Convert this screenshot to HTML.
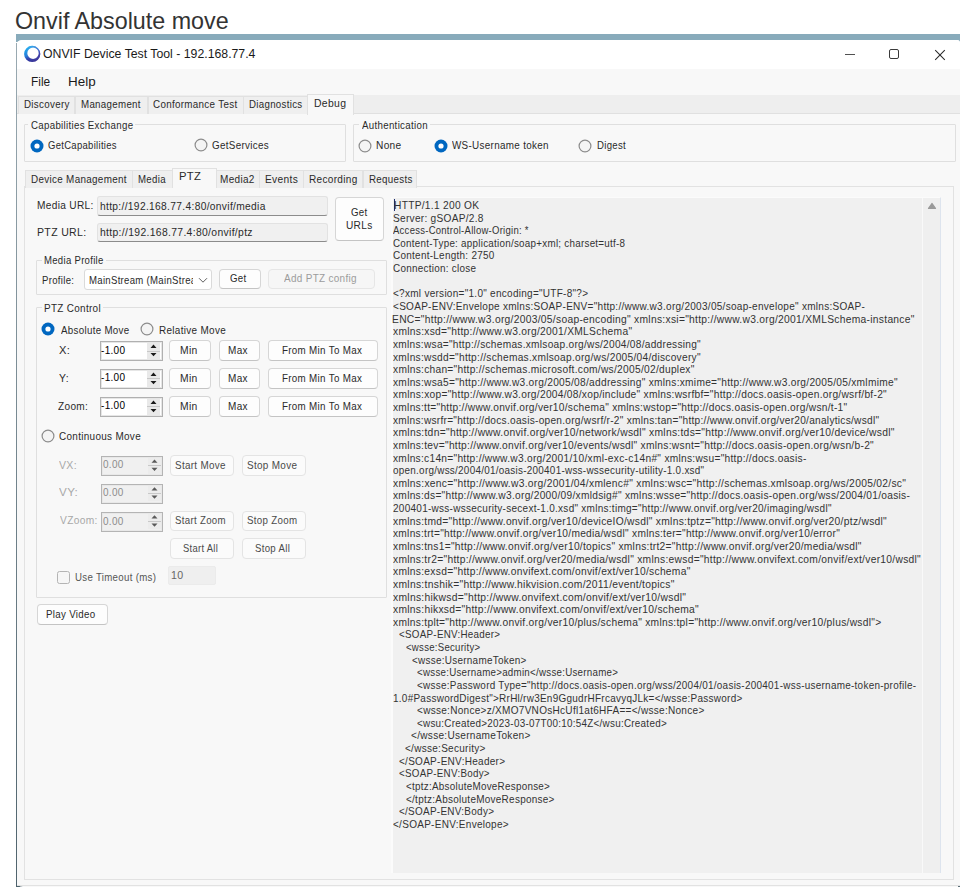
<!DOCTYPE html>
<html><head><meta charset="utf-8"><style>
html,body{margin:0;padding:0;background:#fff;}
body{width:970px;height:887px;position:relative;overflow:hidden;font-family:"Liberation Sans", sans-serif;}
div{font-family:"Liberation Sans", sans-serif;-webkit-text-stroke:0;}
.nt{-webkit-text-stroke:0;}
.rt{-webkit-text-stroke:0.1px currentColor;}
</style></head><body>
<div class="nt" style="position:absolute;left:14.71px;top:8.13px;font-size:23.2px;line-height:26.657px;white-space:pre;letter-spacing:0px;color:#333;font-weight:normal;transform:scaleX(1.0046);transform-origin:0 0;">Onvif Absolute move</div>
<div style="position:absolute;left:16px;top:34px;width:944px;height:8px;box-sizing:border-box;background:#88abbb;"></div>
<div style="position:absolute;left:16px;top:40.3px;width:944px;height:846.7px;box-sizing:border-box;background:#f8f8f8;border-radius:6px 3px 0 0;"></div>
<div style="position:absolute;left:16px;top:40.3px;width:944px;height:28.700000000000003px;box-sizing:border-box;background:#fff;border-radius:6px 3px 0 0;"></div>
<div style="position:absolute;left:16px;top:43px;width:1px;height:844px;box-sizing:border-box;background:linear-gradient(#9aaab2,#6c7e87 60%,#4f636d);"></div>
<div style="position:absolute;left:959px;top:69px;width:1px;height:817px;box-sizing:border-box;background:#ebebeb;"></div>
<svg style="position:absolute;left:16px;top:880px;" width="7" height="7" viewBox="0 0 7 7"><path d="M0,0 L0,7 L7,7 A7,7 0 0 1 0,0 Z" fill="#4d626c"/></svg>
<div style="position:absolute;left:958px;top:885px;width:2px;height:2px;box-sizing:border-box;background:#5a6e78;"></div>
<svg style="position:absolute;left:22px;top:44px;" width="20" height="20" viewBox="0 0 20 20"><defs><linearGradient id="ig" x1="0.1" y1="0.15" x2="0.55" y2="1"><stop offset="0" stop-color="#12a8ee"/><stop offset="0.45" stop-color="#1f78d8"/><stop offset="0.7" stop-color="#1c2aa0"/><stop offset="1" stop-color="#120e80"/></linearGradient><linearGradient id="ig2" x1="0" y1="0" x2="1" y2="0"><stop offset="0" stop-color="#fff" stop-opacity="0"/><stop offset="1" stop-color="#6a5cc0" stop-opacity="0.45"/></linearGradient></defs><path fill-rule="evenodd" fill="url(#ig)" d="M2.1,9.9 a8.1,8.1 0 1,0 16.2,0 a8.1,8.1 0 1,0 -16.2,0 Z M5.3,9.2 a5.75,5.75 0 1,0 11.5,0 a5.75,5.75 0 1,0 -11.5,0 Z"/><path fill-rule="evenodd" fill="url(#ig2)" d="M2.1,9.9 a8.1,8.1 0 1,0 16.2,0 a8.1,8.1 0 1,0 -16.2,0 Z M5.3,9.2 a5.75,5.75 0 1,0 11.5,0 a5.75,5.75 0 1,0 -11.5,0 Z"/></svg>
<div class="" style="position:absolute;left:43.42px;top:47.49px;font-size:12.5px;line-height:14.363px;white-space:pre;letter-spacing:0px;color:#1a1a1a;font-weight:normal;transform:scaleX(0.9820);transform-origin:0 0;">ONVIF Device Test Tool - 192.168.77.4</div>
<div style="position:absolute;left:845px;top:54px;width:10px;height:1px;box-sizing:border-box;background:#505050;"></div>
<div style="position:absolute;left:888.6px;top:48.6px;width:10.899999999999977px;height:10.899999999999999px;box-sizing:border-box;border:1.4px solid #3a3a3a;border-radius:2px;"></div>
<svg style="position:absolute;left:934px;top:48.6px;" width="12" height="12" viewBox="0 0 12 12"><path d="M1.2,1.2 L10.8,10.8 M10.8,1.2 L1.2,10.8" stroke="#2a2a2a" stroke-width="1.05"/></svg>
<div style="position:absolute;left:17px;top:69px;width:943px;height:25.5px;box-sizing:border-box;background:#f8f8f8;"></div>
<div class="" style="position:absolute;left:30.67px;top:74.89px;font-size:12.5px;line-height:14.363px;white-space:pre;letter-spacing:0px;color:#1a1a1a;font-weight:normal;transform:scaleX(0.9486);transform-origin:0 0;">File</div>
<div class="" style="position:absolute;left:68.35px;top:74.89px;font-size:12.5px;line-height:14.363px;white-space:pre;letter-spacing:0px;color:#1a1a1a;font-weight:normal;transform:scaleX(1.0733);transform-origin:0 0;">Help</div>
<div style="position:absolute;left:17px;top:94.5px;width:943px;height:19.0px;box-sizing:border-box;background:#eeeeee;"></div>
<div style="position:absolute;left:17px;top:113px;width:943px;height:773px;box-sizing:border-box;background:#f8f8f8;border-top:1px solid #e0e0e0;border-bottom:1px solid #e2e2e2;"></div>
<div style="position:absolute;left:17.900000000000002px;top:95.6px;width:57.599999999999994px;height:18.900000000000006px;box-sizing:border-box;background:#efefef;border:1px solid #e1e1e1;border-bottom:none;"></div>
<div class="" style="position:absolute;left:24.04px;top:98.27px;font-size:11px;line-height:12.639px;white-space:pre;letter-spacing:0.35px;color:#2a2a2a;font-weight:normal;transform:scaleX(0.8880);transform-origin:0 0;">Discovery</div>
<div style="position:absolute;left:74.6px;top:95.6px;width:73.9px;height:18.900000000000006px;box-sizing:border-box;background:#efefef;border:1px solid #e1e1e1;border-bottom:none;"></div>
<div class="" style="position:absolute;left:81.24px;top:98.27px;font-size:11px;line-height:12.639px;white-space:pre;letter-spacing:0.35px;color:#2a2a2a;font-weight:normal;transform:scaleX(0.8838);transform-origin:0 0;">Management</div>
<div style="position:absolute;left:147.6px;top:95.6px;width:96.1px;height:18.900000000000006px;box-sizing:border-box;background:#efefef;border:1px solid #e1e1e1;border-bottom:none;"></div>
<div class="" style="position:absolute;left:152.74px;top:98.27px;font-size:11px;line-height:12.639px;white-space:pre;letter-spacing:0.35px;color:#2a2a2a;font-weight:normal;transform:scaleX(0.8922);transform-origin:0 0;">Conformance Test</div>
<div style="position:absolute;left:242.79999999999998px;top:95.6px;width:65.50000000000003px;height:18.900000000000006px;box-sizing:border-box;background:#efefef;border:1px solid #e1e1e1;border-bottom:none;"></div>
<div class="" style="position:absolute;left:249.24px;top:98.27px;font-size:11px;line-height:12.639px;white-space:pre;letter-spacing:0.35px;color:#2a2a2a;font-weight:normal;transform:scaleX(0.8807);transform-origin:0 0;">Diagnostics</div>
<div style="position:absolute;left:307.40000000000003px;top:94.1px;width:46.299999999999955px;height:20.900000000000006px;box-sizing:border-box;background:#f8f8f8;border:1px solid #e1e1e1;border-bottom:none;"></div>
<div class="" style="position:absolute;left:313.89px;top:97.17px;font-size:11px;line-height:12.639px;white-space:pre;letter-spacing:0.35px;color:#2a2a2a;font-weight:normal;transform:scaleX(0.9463);transform-origin:0 0;">Debug</div>
<div style="position:absolute;left:23.6px;top:123.89999999999999px;width:322.9px;height:38.10000000000001px;box-sizing:border-box;border:1px solid #dfdfdf;border-radius:1px;"></div>
<div style="position:absolute;left:28.3px;top:120.3px;width:107.2px;height:8.000000000000014px;box-sizing:border-box;background:#f8f8f8;"></div>
<div class="" style="position:absolute;left:30.85px;top:118.87px;font-size:11px;line-height:12.639px;white-space:pre;letter-spacing:0.35px;color:#2a2a2a;font-weight:normal;transform:scaleX(0.8809);transform-origin:0 0;">Capabilities Exchange</div>
<svg style="position:absolute;left:29.5px;top:138.6px;" width="14" height="14" viewBox="0 0 14 14"><circle cx="7" cy="7" r="6.5" fill="#0067c0"/><circle cx="7" cy="7" r="2.6" fill="#fff"/></svg>
<div class="" style="position:absolute;left:47.56px;top:139.27px;font-size:11px;line-height:12.639px;white-space:pre;letter-spacing:0.35px;color:#2a2a2a;font-weight:normal;transform:scaleX(0.8622);transform-origin:0 0;">GetCapabilities</div>
<svg style="position:absolute;left:193.7px;top:138.4px;" width="14" height="14" viewBox="0 0 14 14"><circle cx="7" cy="7" r="5.9" fill="#f4f4f4" stroke="#8c8c8c" stroke-width="1.2"/></svg>
<div class="" style="position:absolute;left:211.54px;top:139.27px;font-size:11px;line-height:12.639px;white-space:pre;letter-spacing:0.35px;color:#2a2a2a;font-weight:normal;transform:scaleX(0.8953);transform-origin:0 0;">GetServices</div>
<div style="position:absolute;left:352.8px;top:124.0px;width:603.5px;height:38.30000000000001px;box-sizing:border-box;border:1px solid #dfdfdf;border-radius:1px;"></div>
<div style="position:absolute;left:358.5px;top:120.4px;width:71.0px;height:8.0px;box-sizing:border-box;background:#f8f8f8;"></div>
<div class="" style="position:absolute;left:361.50px;top:118.87px;font-size:11px;line-height:12.639px;white-space:pre;letter-spacing:0.35px;color:#2a2a2a;font-weight:normal;transform:scaleX(0.8826);transform-origin:0 0;">Authentication</div>
<svg style="position:absolute;left:357.5px;top:138.5px;" width="14" height="14" viewBox="0 0 14 14"><circle cx="7" cy="7" r="5.9" fill="#f4f4f4" stroke="#8c8c8c" stroke-width="1.2"/></svg>
<div class="" style="position:absolute;left:376.21px;top:139.27px;font-size:11px;line-height:12.639px;white-space:pre;letter-spacing:0.35px;color:#2a2a2a;font-weight:normal;transform:scaleX(0.9216);transform-origin:0 0;">None</div>
<svg style="position:absolute;left:433.5px;top:138.5px;" width="14" height="14" viewBox="0 0 14 14"><circle cx="7" cy="7" r="6.5" fill="#0067c0"/><circle cx="7" cy="7" r="2.6" fill="#fff"/></svg>
<div class="" style="position:absolute;left:452.00px;top:139.27px;font-size:11px;line-height:12.639px;white-space:pre;letter-spacing:0.35px;color:#2a2a2a;font-weight:normal;transform:scaleX(0.8966);transform-origin:0 0;">WS-Username token</div>
<svg style="position:absolute;left:577.7px;top:138.5px;" width="14" height="14" viewBox="0 0 14 14"><circle cx="7" cy="7" r="5.9" fill="#f4f4f4" stroke="#8c8c8c" stroke-width="1.2"/></svg>
<div class="" style="position:absolute;left:596.65px;top:139.27px;font-size:11px;line-height:12.639px;white-space:pre;letter-spacing:0.35px;color:#2a2a2a;font-weight:normal;transform:scaleX(0.8721);transform-origin:0 0;">Digest</div>
<div style="position:absolute;left:23.900000000000002px;top:186.4px;width:930.0px;height:693.3000000000001px;box-sizing:border-box;background:#f8f8f8;border:1px solid #e2e2e2;"></div>
<div style="position:absolute;left:24.900000000000002px;top:169.6px;width:108.1px;height:18.400000000000006px;box-sizing:border-box;background:#efefef;border:1px solid #e1e1e1;border-bottom:none;"></div>
<div class="" style="position:absolute;left:30.73px;top:172.57px;font-size:11px;line-height:12.639px;white-space:pre;letter-spacing:0.35px;color:#2a2a2a;font-weight:normal;transform:scaleX(0.8972);transform-origin:0 0;">Device Management</div>
<div style="position:absolute;left:132.1px;top:169.6px;width:41.099999999999994px;height:18.400000000000006px;box-sizing:border-box;background:#efefef;border:1px solid #e1e1e1;border-bottom:none;"></div>
<div class="" style="position:absolute;left:137.95px;top:172.57px;font-size:11px;line-height:12.639px;white-space:pre;letter-spacing:0.35px;color:#2a2a2a;font-weight:normal;transform:scaleX(0.8767);transform-origin:0 0;">Media</div>
<div style="position:absolute;left:215.79999999999998px;top:169.6px;width:44.30000000000004px;height:18.400000000000006px;box-sizing:border-box;background:#efefef;border:1px solid #e1e1e1;border-bottom:none;"></div>
<div class="" style="position:absolute;left:220.22px;top:172.57px;font-size:11px;line-height:12.639px;white-space:pre;letter-spacing:0.35px;color:#2a2a2a;font-weight:normal;transform:scaleX(0.9090);transform-origin:0 0;">Media2</div>
<div style="position:absolute;left:259.20000000000005px;top:169.6px;width:44.799999999999955px;height:18.400000000000006px;box-sizing:border-box;background:#efefef;border:1px solid #e1e1e1;border-bottom:none;"></div>
<div class="" style="position:absolute;left:265.21px;top:172.57px;font-size:11px;line-height:12.639px;white-space:pre;letter-spacing:0.35px;color:#2a2a2a;font-weight:normal;transform:scaleX(0.9246);transform-origin:0 0;">Events</div>
<div style="position:absolute;left:303.1px;top:169.6px;width:59.89999999999998px;height:18.400000000000006px;box-sizing:border-box;background:#efefef;border:1px solid #e1e1e1;border-bottom:none;"></div>
<div class="" style="position:absolute;left:309.22px;top:172.57px;font-size:11px;line-height:12.639px;white-space:pre;letter-spacing:0.35px;color:#2a2a2a;font-weight:normal;transform:scaleX(0.9114);transform-origin:0 0;">Recording</div>
<div style="position:absolute;left:362.8px;top:169.6px;width:54.0px;height:18.400000000000006px;box-sizing:border-box;background:#efefef;border:1px solid #e1e1e1;border-bottom:none;"></div>
<div class="" style="position:absolute;left:369.14px;top:172.57px;font-size:11px;line-height:12.639px;white-space:pre;letter-spacing:0.35px;color:#2a2a2a;font-weight:normal;transform:scaleX(0.8865);transform-origin:0 0;">Requests</div>
<div style="position:absolute;left:172.29999999999998px;top:167.79999999999998px;width:44.400000000000006px;height:20.700000000000017px;box-sizing:border-box;background:#f8f8f8;border:1px solid #e1e1e1;border-bottom:none;"></div>
<div class="" style="position:absolute;left:178.62px;top:170.47px;font-size:11px;line-height:12.639px;white-space:pre;letter-spacing:0.35px;color:#2a2a2a;font-weight:normal;transform:scaleX(1.0231);transform-origin:0 0;">PTZ</div>
<div class="" style="position:absolute;left:36.61px;top:199.47px;font-size:11px;line-height:12.639px;white-space:pre;letter-spacing:0.35px;color:#2a2a2a;font-weight:normal;transform:scaleX(0.9196);transform-origin:0 0;">Media URL:</div>
<div style="position:absolute;left:97.19999999999999px;top:195.6px;width:231.3px;height:20.099999999999994px;box-sizing:border-box;background:#f0f0f0;border:1px solid #e2e2e2;border-bottom:1.6px solid #8c8c8c;border-radius:3px;"></div>
<div class="" style="position:absolute;left:99.76px;top:199.57px;font-size:11px;line-height:12.639px;white-space:pre;letter-spacing:0.35px;color:#2a2a2a;font-weight:normal;transform:scaleX(0.9296);transform-origin:0 0;">http://192.168.77.4:80/onvif/media</div>
<div class="" style="position:absolute;left:36.58px;top:225.67px;font-size:11px;line-height:12.639px;white-space:pre;letter-spacing:0.35px;color:#2a2a2a;font-weight:normal;transform:scaleX(0.9578);transform-origin:0 0;">PTZ URL:</div>
<div style="position:absolute;left:97.19999999999999px;top:222.6px;width:231.3px;height:19.400000000000006px;box-sizing:border-box;background:#f0f0f0;border:1px solid #e2e2e2;border-bottom:1.6px solid #8c8c8c;border-radius:3px;"></div>
<div class="" style="position:absolute;left:99.75px;top:225.87px;font-size:11px;line-height:12.639px;white-space:pre;letter-spacing:0.35px;color:#2a2a2a;font-weight:normal;transform:scaleX(0.9421);transform-origin:0 0;">http://192.168.77.4:80/onvif/ptz</div>
<div style="position:absolute;left:335.0px;top:196.6px;width:49.0px;height:44.099999999999994px;box-sizing:border-box;background:#fdfdfd;border:1px solid #d6d6d6;border-bottom-color:#c4c4c4;border-radius:4px;"></div>
<div class="" style="position:absolute;left:350.60px;top:205.87px;font-size:11px;line-height:12.639px;white-space:pre;letter-spacing:0.35px;color:#2a2a2a;font-weight:normal;transform:scaleX(0.8801);transform-origin:0 0;">Get</div>
<div class="" style="position:absolute;left:345.72px;top:218.87px;font-size:11px;line-height:12.639px;white-space:pre;letter-spacing:0.35px;color:#2a2a2a;font-weight:normal;transform:scaleX(0.9192);transform-origin:0 0;">URLs</div>
<div style="position:absolute;left:35.9px;top:260.1px;width:350.8px;height:34.599999999999966px;box-sizing:border-box;border:1px solid #dfdfdf;border-radius:1px;"></div>
<div style="position:absolute;left:42.2px;top:256.5px;width:64.2px;height:8.0px;box-sizing:border-box;background:#f8f8f8;"></div>
<div class="" style="position:absolute;left:44.45px;top:254.47px;font-size:11px;line-height:12.639px;white-space:pre;letter-spacing:0.35px;color:#2a2a2a;font-weight:normal;transform:scaleX(0.8675);transform-origin:0 0;">Media Profile</div>
<div class="" style="position:absolute;left:41.75px;top:273.67px;font-size:11px;line-height:12.639px;white-space:pre;letter-spacing:0.35px;color:#2a2a2a;font-weight:normal;transform:scaleX(0.8699);transform-origin:0 0;">Profile:</div>
<div style="position:absolute;left:84.39999999999999px;top:269.20000000000005px;width:127.50000000000001px;height:20.499999999999943px;box-sizing:border-box;background:#fff;border:1px solid #dadada;border-radius:3px;"></div>
<div style="position:absolute;left:88px;top:270px;width:104.5px;height:18px;overflow:hidden;">
<div class="" style="position:absolute;left:1.00px;top:3.67px;font-size:11px;line-height:12.639px;white-space:pre;letter-spacing:0.35px;color:#2a2a2a;font-weight:normal;transform:scaleX(0.8700);transform-origin:0 0;">MainStream (MainStream)</div>
</div>
<svg style="position:absolute;left:198px;top:277px;" width="10" height="7" viewBox="0 0 10 7"><path d="M1,1.2 L5,5.2 L9,1.2" fill="none" stroke="#606060" stroke-width="1"/></svg>
<div style="position:absolute;left:218.6px;top:268.6px;width:42.00000000000003px;height:20.399999999999977px;box-sizing:border-box;background:#fdfdfd;border:1px solid #d6d6d6;border-bottom-color:#c4c4c4;border-radius:4px;"></div>
<div class="" style="position:absolute;left:229.70px;top:272.07px;font-size:11px;line-height:12.639px;white-space:pre;letter-spacing:0.35px;color:#2a2a2a;font-weight:normal;transform:scaleX(0.8801);transform-origin:0 0;">Get</div>
<div style="position:absolute;left:267.90000000000003px;top:268.6px;width:107.39999999999998px;height:20.399999999999977px;box-sizing:border-box;background:#f6f6f6;border:1px solid #e6e6e6;border-radius:4px;"></div>
<div class="" style="position:absolute;left:284.05px;top:272.42px;font-size:11px;line-height:12.639px;white-space:pre;letter-spacing:0.35px;color:#9c9c9c;font-weight:normal;transform:scaleX(0.9029);transform-origin:0 0;">Add PTZ config</div>
<div style="position:absolute;left:36.1px;top:307.40000000000003px;width:350.59999999999997px;height:290.3px;box-sizing:border-box;border:1px solid #dfdfdf;border-radius:1px;"></div>
<div style="position:absolute;left:41.5px;top:303.8px;width:61.2px;height:8.0px;box-sizing:border-box;background:#f8f8f8;"></div>
<div class="" style="position:absolute;left:43.72px;top:302.37px;font-size:11px;line-height:12.639px;white-space:pre;letter-spacing:0.35px;color:#2a2a2a;font-weight:normal;transform:scaleX(0.9019);transform-origin:0 0;">PTZ Control</div>
<svg style="position:absolute;left:41.3px;top:322.4px;" width="14" height="14" viewBox="0 0 14 14"><circle cx="7" cy="7" r="6.5" fill="#0067c0"/><circle cx="7" cy="7" r="2.6" fill="#fff"/></svg>
<div class="" style="position:absolute;left:60.70px;top:323.57px;font-size:11px;line-height:12.639px;white-space:pre;letter-spacing:0.35px;color:#2a2a2a;font-weight:normal;transform:scaleX(0.8861);transform-origin:0 0;">Absolute Move</div>
<svg style="position:absolute;left:140.3px;top:322.4px;" width="14" height="14" viewBox="0 0 14 14"><circle cx="7" cy="7" r="5.9" fill="#f4f4f4" stroke="#8c8c8c" stroke-width="1.2"/></svg>
<div class="" style="position:absolute;left:158.92px;top:323.57px;font-size:11px;line-height:12.639px;white-space:pre;letter-spacing:0.35px;color:#2a2a2a;font-weight:normal;transform:scaleX(0.9037);transform-origin:0 0;">Relative Move</div>
<div class="" style="position:absolute;left:58.63px;top:343.97px;font-size:11px;line-height:12.639px;white-space:pre;letter-spacing:0.35px;color:#2a2a2a;font-weight:normal;transform:scaleX(1.0128);transform-origin:0 0;">X:</div>
<div style="position:absolute;left:99.6px;top:340.8px;width:63.30000000000001px;height:20.69999999999999px;box-sizing:border-box;background:#fff;border:1px solid #b0b0b0;"></div>
<div style="position:absolute;left:100.6px;top:341.8px;width:61.30000000000001px;height:18.69999999999999px;box-sizing:border-box;border:1px solid #e6e6e6;"></div>
<div style="position:absolute;left:147.4px;top:343.2px;width:13.0px;height:15.800000000000011px;box-sizing:border-box;background:#e9e9e9;"></div>
<div style="position:absolute;left:147.4px;top:350.6px;width:13.0px;height:1.0px;box-sizing:border-box;background:#c8c8c8;"></div>
<svg style="position:absolute;left:147.4px;top:341.2px;" width="15.0" height="19.80000000000001" viewBox="0 0 15.0 19.80000000000001"><path d="M3.5,6.900000000000034 L9.5,6.900000000000034 L6.5,3.6000000000000343 Z M3.5,11.900000000000034 L9.5,11.900000000000034 L6.5,15.200000000000035 Z" fill="#1a1a1a"/></svg>
<div class="" style="position:absolute;left:101.49px;top:343.57px;font-size:11px;line-height:12.639px;white-space:pre;letter-spacing:0.35px;color:#000;font-weight:normal;transform:scaleX(0.9089);transform-origin:0 0;">-1.00</div>
<div style="position:absolute;left:169.1px;top:340.40000000000003px;width:41.900000000000006px;height:20.599999999999966px;box-sizing:border-box;background:#fdfdfd;border:1px solid #d6d6d6;border-bottom-color:#c4c4c4;border-radius:4px;"></div>
<div class="" style="position:absolute;left:179.74px;top:344.32px;font-size:11px;line-height:12.639px;white-space:pre;letter-spacing:0.35px;color:#2a2a2a;font-weight:normal;transform:scaleX(0.9382);transform-origin:0 0;">Min</div>
<div style="position:absolute;left:218.9px;top:340.40000000000003px;width:41.20000000000002px;height:20.599999999999966px;box-sizing:border-box;background:#fdfdfd;border:1px solid #d6d6d6;border-bottom-color:#c4c4c4;border-radius:4px;"></div>
<div class="" style="position:absolute;left:227.82px;top:344.32px;font-size:11px;line-height:12.639px;white-space:pre;letter-spacing:0.35px;color:#2a2a2a;font-weight:normal;transform:scaleX(0.9068);transform-origin:0 0;">Max</div>
<div style="position:absolute;left:268.0px;top:340.40000000000003px;width:110.19999999999999px;height:20.599999999999966px;box-sizing:border-box;background:#fdfdfd;border:1px solid #d6d6d6;border-bottom-color:#c4c4c4;border-radius:4px;"></div>
<div class="" style="position:absolute;left:281.89px;top:344.32px;font-size:11px;line-height:12.639px;white-space:pre;letter-spacing:0.35px;color:#2a2a2a;font-weight:normal;transform:scaleX(0.8899);transform-origin:0 0;">From Min To Max</div>
<div class="" style="position:absolute;left:58.64px;top:371.67px;font-size:11px;line-height:12.639px;white-space:pre;letter-spacing:0.35px;color:#2a2a2a;font-weight:normal;transform:scaleX(0.9475);transform-origin:0 0;">Y:</div>
<div style="position:absolute;left:99.6px;top:368.5px;width:63.30000000000001px;height:20.69999999999999px;box-sizing:border-box;background:#fff;border:1px solid #b0b0b0;"></div>
<div style="position:absolute;left:100.6px;top:369.5px;width:61.30000000000001px;height:18.69999999999999px;box-sizing:border-box;border:1px solid #e6e6e6;"></div>
<div style="position:absolute;left:147.4px;top:370.9px;width:13.0px;height:15.800000000000011px;box-sizing:border-box;background:#e9e9e9;"></div>
<div style="position:absolute;left:147.4px;top:378.29999999999995px;width:13.0px;height:1.0px;box-sizing:border-box;background:#c8c8c8;"></div>
<svg style="position:absolute;left:147.4px;top:368.9px;" width="15.0" height="19.80000000000001" viewBox="0 0 15.0 19.80000000000001"><path d="M3.5,6.899999999999977 L9.5,6.899999999999977 L6.5,3.5999999999999774 Z M3.5,11.899999999999977 L9.5,11.899999999999977 L6.5,15.199999999999978 Z" fill="#1a1a1a"/></svg>
<div class="" style="position:absolute;left:101.49px;top:371.27px;font-size:11px;line-height:12.639px;white-space:pre;letter-spacing:0.35px;color:#000;font-weight:normal;transform:scaleX(0.9089);transform-origin:0 0;">-1.00</div>
<div style="position:absolute;left:169.1px;top:368.1px;width:41.900000000000006px;height:20.599999999999966px;box-sizing:border-box;background:#fdfdfd;border:1px solid #d6d6d6;border-bottom-color:#c4c4c4;border-radius:4px;"></div>
<div class="" style="position:absolute;left:179.74px;top:372.02px;font-size:11px;line-height:12.639px;white-space:pre;letter-spacing:0.35px;color:#2a2a2a;font-weight:normal;transform:scaleX(0.9382);transform-origin:0 0;">Min</div>
<div style="position:absolute;left:218.9px;top:368.1px;width:41.20000000000002px;height:20.599999999999966px;box-sizing:border-box;background:#fdfdfd;border:1px solid #d6d6d6;border-bottom-color:#c4c4c4;border-radius:4px;"></div>
<div class="" style="position:absolute;left:227.82px;top:372.02px;font-size:11px;line-height:12.639px;white-space:pre;letter-spacing:0.35px;color:#2a2a2a;font-weight:normal;transform:scaleX(0.9068);transform-origin:0 0;">Max</div>
<div style="position:absolute;left:268.0px;top:368.1px;width:110.19999999999999px;height:20.599999999999966px;box-sizing:border-box;background:#fdfdfd;border:1px solid #d6d6d6;border-bottom-color:#c4c4c4;border-radius:4px;"></div>
<div class="" style="position:absolute;left:281.89px;top:372.02px;font-size:11px;line-height:12.639px;white-space:pre;letter-spacing:0.35px;color:#2a2a2a;font-weight:normal;transform:scaleX(0.8899);transform-origin:0 0;">From Min To Max</div>
<div class="" style="position:absolute;left:58.49px;top:399.67px;font-size:11px;line-height:12.639px;white-space:pre;letter-spacing:0.35px;color:#2a2a2a;font-weight:normal;transform:scaleX(0.9156);transform-origin:0 0;">Zoom:</div>
<div style="position:absolute;left:99.6px;top:396.5px;width:63.30000000000001px;height:20.69999999999999px;box-sizing:border-box;background:#fff;border:1px solid #b0b0b0;"></div>
<div style="position:absolute;left:100.6px;top:397.5px;width:61.30000000000001px;height:18.69999999999999px;box-sizing:border-box;border:1px solid #e6e6e6;"></div>
<div style="position:absolute;left:147.4px;top:398.9px;width:13.0px;height:15.800000000000011px;box-sizing:border-box;background:#e9e9e9;"></div>
<div style="position:absolute;left:147.4px;top:406.29999999999995px;width:13.0px;height:1.0px;box-sizing:border-box;background:#c8c8c8;"></div>
<svg style="position:absolute;left:147.4px;top:396.9px;" width="15.0" height="19.80000000000001" viewBox="0 0 15.0 19.80000000000001"><path d="M3.5,6.899999999999977 L9.5,6.899999999999977 L6.5,3.5999999999999774 Z M3.5,11.899999999999977 L9.5,11.899999999999977 L6.5,15.199999999999978 Z" fill="#1a1a1a"/></svg>
<div class="" style="position:absolute;left:101.49px;top:399.27px;font-size:11px;line-height:12.639px;white-space:pre;letter-spacing:0.35px;color:#000;font-weight:normal;transform:scaleX(0.9089);transform-origin:0 0;">-1.00</div>
<div style="position:absolute;left:169.1px;top:396.1px;width:41.900000000000006px;height:20.599999999999966px;box-sizing:border-box;background:#fdfdfd;border:1px solid #d6d6d6;border-bottom-color:#c4c4c4;border-radius:4px;"></div>
<div class="" style="position:absolute;left:179.74px;top:400.02px;font-size:11px;line-height:12.639px;white-space:pre;letter-spacing:0.35px;color:#2a2a2a;font-weight:normal;transform:scaleX(0.9382);transform-origin:0 0;">Min</div>
<div style="position:absolute;left:218.9px;top:396.1px;width:41.20000000000002px;height:20.599999999999966px;box-sizing:border-box;background:#fdfdfd;border:1px solid #d6d6d6;border-bottom-color:#c4c4c4;border-radius:4px;"></div>
<div class="" style="position:absolute;left:227.82px;top:400.02px;font-size:11px;line-height:12.639px;white-space:pre;letter-spacing:0.35px;color:#2a2a2a;font-weight:normal;transform:scaleX(0.9068);transform-origin:0 0;">Max</div>
<div style="position:absolute;left:268.0px;top:396.1px;width:110.19999999999999px;height:20.599999999999966px;box-sizing:border-box;background:#fdfdfd;border:1px solid #d6d6d6;border-bottom-color:#c4c4c4;border-radius:4px;"></div>
<div class="" style="position:absolute;left:281.89px;top:400.02px;font-size:11px;line-height:12.639px;white-space:pre;letter-spacing:0.35px;color:#2a2a2a;font-weight:normal;transform:scaleX(0.8899);transform-origin:0 0;">From Min To Max</div>
<svg style="position:absolute;left:41.3px;top:428.5px;" width="14" height="14" viewBox="0 0 14 14"><circle cx="7" cy="7" r="5.9" fill="#f4f4f4" stroke="#8c8c8c" stroke-width="1.2"/></svg>
<div class="" style="position:absolute;left:59.13px;top:429.87px;font-size:11px;line-height:12.639px;white-space:pre;letter-spacing:0.35px;color:#2a2a2a;font-weight:normal;transform:scaleX(0.9024);transform-origin:0 0;">Continuous Move</div>
<div class="" style="position:absolute;left:59.20px;top:458.87px;font-size:11px;line-height:12.639px;white-space:pre;letter-spacing:0.35px;color:#a8a8a8;font-weight:normal;transform:scaleX(0.9578);transform-origin:0 0;">VX:</div>
<div style="position:absolute;left:100.8px;top:455.6px;width:62.60000000000001px;height:20.399999999999977px;box-sizing:border-box;background:#f0f0f0;border:1px solid #b4b4b4;"></div>
<div style="position:absolute;left:101.8px;top:456.6px;width:60.60000000000001px;height:18.399999999999977px;box-sizing:border-box;border:1px solid #e8e8e8;"></div>
<div style="position:absolute;left:147.9px;top:458px;width:13.0px;height:15.5px;box-sizing:border-box;background:#ececec;"></div>
<div style="position:absolute;left:147.9px;top:465.25px;width:13.0px;height:1.0px;box-sizing:border-box;background:#c8c8c8;"></div>
<svg style="position:absolute;left:147.9px;top:456px;" width="15.0" height="19.5" viewBox="0 0 15.0 19.5"><path d="M3.5,6.75 L9.5,6.75 L6.5,3.45 Z M3.5,11.75 L9.5,11.75 L6.5,15.05 Z" fill="#5a5a5a"/></svg>
<div class="" style="position:absolute;left:102.69px;top:458.37px;font-size:11px;line-height:12.639px;white-space:pre;letter-spacing:0.35px;color:#8c8c8c;font-weight:normal;transform:scaleX(0.9065);transform-origin:0 0;">0.00</div>
<div style="position:absolute;left:169.79999999999998px;top:455.3px;width:64.20000000000002px;height:20.30000000000001px;box-sizing:border-box;background:#fbfbfb;border:1px solid #e4e4e4;border-radius:4px;"></div>
<div class="" style="position:absolute;left:175.14px;top:459.07px;font-size:11px;line-height:12.639px;white-space:pre;letter-spacing:0.35px;color:#4a4a4a;font-weight:normal;transform:scaleX(0.8966);transform-origin:0 0;">Start Move</div>
<div style="position:absolute;left:241.9px;top:455.3px;width:63.99999999999997px;height:20.30000000000001px;box-sizing:border-box;background:#fbfbfb;border:1px solid #e4e4e4;border-radius:4px;"></div>
<div class="" style="position:absolute;left:247.39px;top:459.07px;font-size:11px;line-height:12.639px;white-space:pre;letter-spacing:0.35px;color:#4a4a4a;font-weight:normal;transform:scaleX(0.9030);transform-origin:0 0;">Stop Move</div>
<div class="" style="position:absolute;left:59.20px;top:486.47px;font-size:11px;line-height:12.639px;white-space:pre;letter-spacing:0.35px;color:#a8a8a8;font-weight:normal;transform:scaleX(1.0577);transform-origin:0 0;">VY:</div>
<div style="position:absolute;left:100.8px;top:483.70000000000005px;width:62.60000000000001px;height:19.899999999999977px;box-sizing:border-box;background:#f0f0f0;border:1px solid #b4b4b4;"></div>
<div style="position:absolute;left:101.8px;top:484.70000000000005px;width:60.60000000000001px;height:17.899999999999977px;box-sizing:border-box;border:1px solid #e8e8e8;"></div>
<div style="position:absolute;left:147.9px;top:486.1px;width:13.0px;height:15.0px;box-sizing:border-box;background:#ececec;"></div>
<div style="position:absolute;left:147.9px;top:493.1px;width:13.0px;height:1.0px;box-sizing:border-box;background:#c8c8c8;"></div>
<svg style="position:absolute;left:147.9px;top:484.1px;" width="15.0" height="19.0" viewBox="0 0 15.0 19.0"><path d="M3.5,6.5 L9.5,6.5 L6.5,3.2 Z M3.5,11.5 L9.5,11.5 L6.5,14.8 Z" fill="#5a5a5a"/></svg>
<div class="" style="position:absolute;left:102.69px;top:486.47px;font-size:11px;line-height:12.639px;white-space:pre;letter-spacing:0.35px;color:#8c8c8c;font-weight:normal;transform:scaleX(0.9065);transform-origin:0 0;">0.00</div>
<div class="" style="position:absolute;left:59.60px;top:514.47px;font-size:11px;line-height:12.639px;white-space:pre;letter-spacing:0.35px;color:#a8a8a8;font-weight:normal;transform:scaleX(0.9270);transform-origin:0 0;">VZoom:</div>
<div style="position:absolute;left:100.8px;top:511.80000000000007px;width:62.60000000000001px;height:19.999999999999886px;box-sizing:border-box;background:#f0f0f0;border:1px solid #b4b4b4;"></div>
<div style="position:absolute;left:101.8px;top:512.8000000000001px;width:60.60000000000001px;height:17.999999999999886px;box-sizing:border-box;border:1px solid #e8e8e8;"></div>
<div style="position:absolute;left:147.9px;top:514.2px;width:13.0px;height:15.099999999999909px;box-sizing:border-box;background:#ececec;"></div>
<div style="position:absolute;left:147.9px;top:521.25px;width:13.0px;height:1.0px;box-sizing:border-box;background:#c8c8c8;"></div>
<svg style="position:absolute;left:147.9px;top:512.2px;" width="15.0" height="19.09999999999991" viewBox="0 0 15.0 19.09999999999991"><path d="M3.5,6.5499999999999545 L9.5,6.5499999999999545 L6.5,3.2499999999999547 Z M3.5,11.549999999999955 L9.5,11.549999999999955 L6.5,14.849999999999955 Z" fill="#5a5a5a"/></svg>
<div class="" style="position:absolute;left:102.69px;top:514.57px;font-size:11px;line-height:12.639px;white-space:pre;letter-spacing:0.35px;color:#8c8c8c;font-weight:normal;transform:scaleX(0.9065);transform-origin:0 0;">0.00</div>
<div style="position:absolute;left:169.79999999999998px;top:510.5px;width:64.20000000000002px;height:20.399999999999977px;box-sizing:border-box;background:#fbfbfb;border:1px solid #e4e4e4;border-radius:4px;"></div>
<div class="" style="position:absolute;left:175.15px;top:514.32px;font-size:11px;line-height:12.639px;white-space:pre;letter-spacing:0.35px;color:#4a4a4a;font-weight:normal;transform:scaleX(0.8792);transform-origin:0 0;">Start Zoom</div>
<div style="position:absolute;left:241.9px;top:510.5px;width:63.99999999999997px;height:20.399999999999977px;box-sizing:border-box;background:#fbfbfb;border:1px solid #e4e4e4;border-radius:4px;"></div>
<div class="" style="position:absolute;left:247.40px;top:514.32px;font-size:11px;line-height:12.639px;white-space:pre;letter-spacing:0.35px;color:#4a4a4a;font-weight:normal;transform:scaleX(0.8853);transform-origin:0 0;">Stop Zoom</div>
<div style="position:absolute;left:169.79999999999998px;top:538.3000000000001px;width:64.20000000000002px;height:20.59999999999991px;box-sizing:border-box;background:#fbfbfb;border:1px solid #e4e4e4;border-radius:4px;"></div>
<div class="" style="position:absolute;left:182.86px;top:542.22px;font-size:11px;line-height:12.639px;white-space:pre;letter-spacing:0.35px;color:#4a4a4a;font-weight:normal;transform:scaleX(0.8548);transform-origin:0 0;">Start All</div>
<div style="position:absolute;left:241.9px;top:538.3000000000001px;width:63.99999999999997px;height:20.59999999999991px;box-sizing:border-box;background:#fbfbfb;border:1px solid #e4e4e4;border-radius:4px;"></div>
<div class="" style="position:absolute;left:254.85px;top:542.22px;font-size:11px;line-height:12.639px;white-space:pre;letter-spacing:0.35px;color:#4a4a4a;font-weight:normal;transform:scaleX(0.8755);transform-origin:0 0;">Stop All</div>
<div style="position:absolute;left:57.1px;top:570.5px;width:13.399999999999999px;height:13.0px;box-sizing:border-box;background:#f6f6f6;border:1px solid #b4b4b4;border-radius:2.5px;"></div>
<div class="" style="position:absolute;left:75.30px;top:570.87px;font-size:11px;line-height:12.639px;white-space:pre;letter-spacing:0.35px;color:#555;font-weight:normal;transform:scaleX(0.8793);transform-origin:0 0;">Use Timeout (ms)</div>
<div style="position:absolute;left:167.5px;top:565.6px;width:48.5px;height:19.199999999999932px;box-sizing:border-box;background:#efefef;border:1px solid #ebebeb;border-radius:2px;"></div>
<div class="" style="position:absolute;left:170.84px;top:569.37px;font-size:11px;line-height:12.639px;white-space:pre;letter-spacing:0.35px;color:#666;font-weight:normal;transform:scaleX(0.9635);transform-origin:0 0;">10</div>
<div style="position:absolute;left:36.9px;top:604.1px;width:71.30000000000001px;height:20.799999999999955px;box-sizing:border-box;background:#fdfdfd;border:1px solid #d6d6d6;border-bottom-color:#c4c4c4;border-radius:4px;"></div>
<div class="" style="position:absolute;left:46.24px;top:608.12px;font-size:11px;line-height:12.639px;white-space:pre;letter-spacing:0.35px;color:#2a2a2a;font-weight:normal;transform:scaleX(0.8850);transform-origin:0 0;">Play Video</div>
<div style="position:absolute;left:390.8px;top:196.6px;width:550.4000000000001px;height:676.9px;box-sizing:border-box;background:#f0f0f0;border-left:2px solid #fbfbfb;border-top:1.2px solid #fbfbfb;border-right:1.2px solid #dde4ee;"></div>
<div style="position:absolute;left:922.3px;top:197.6px;width:17.700000000000045px;height:675.9px;box-sizing:border-box;background:#efefef;border-left:1.6px solid #f9f9f9;"></div>
<svg style="position:absolute;left:926px;top:201px;" width="12" height="10" viewBox="0 0 12 10"><path d="M2.6,7.4 L6,2.6 L9.4,7.4 Z" fill="#9a9a9a" stroke="#9a9a9a" stroke-width="1.4" stroke-linejoin="round"/></svg>
<div style="position:absolute;left:394px;top:199px;width:1px;height:12px;box-sizing:border-box;background:#1f2f6f;"></div>
<div class="nt" style="position:absolute;left:394.10px;top:198.97px;font-size:11px;line-height:12.639px;white-space:pre;letter-spacing:0.3px;color:#333;font-weight:normal;transform:scaleX(0.9278);transform-origin:0 0;">HTTP/1.1 200 OK</div>
<div class="nt" style="position:absolute;left:392.68px;top:211.60px;font-size:11px;line-height:12.639px;white-space:pre;letter-spacing:0.3px;color:#333;font-weight:normal;transform:scaleX(0.9195);transform-origin:0 0;">Server: gSOAP/2.8</div>
<div class="nt" style="position:absolute;left:393.20px;top:224.23px;font-size:11px;line-height:12.639px;white-space:pre;letter-spacing:0.3px;color:#333;font-weight:normal;transform:scaleX(0.8647);transform-origin:0 0;">Access-Control-Allow-Origin: *</div>
<div class="nt" style="position:absolute;left:392.74px;top:236.86px;font-size:11px;line-height:12.639px;white-space:pre;letter-spacing:0.3px;color:#333;font-weight:normal;transform:scaleX(0.8918);transform-origin:0 0;">Content-Type: application/soap+xml; charset=utf-8</div>
<div class="nt" style="position:absolute;left:392.73px;top:249.49px;font-size:11px;line-height:12.639px;white-space:pre;letter-spacing:0.3px;color:#333;font-weight:normal;transform:scaleX(0.9036);transform-origin:0 0;">Content-Length: 2750</div>
<div class="nt" style="position:absolute;left:392.74px;top:262.12px;font-size:11px;line-height:12.639px;white-space:pre;letter-spacing:0.3px;color:#333;font-weight:normal;transform:scaleX(0.8994);transform-origin:0 0;">Connection: close</div>
<div class="nt" style="position:absolute;left:392.73px;top:287.38px;font-size:11px;line-height:12.639px;white-space:pre;letter-spacing:0.3px;color:#333;font-weight:normal;transform:scaleX(0.9096);transform-origin:0 0;">&lt;?xml version="1.0" encoding="UTF-8"?&gt;</div>
<div class="nt" style="position:absolute;left:392.73px;top:300.01px;font-size:11px;line-height:12.639px;white-space:pre;letter-spacing:0.3px;color:#333;font-weight:normal;transform:scaleX(0.9119);transform-origin:0 0;">&lt;SOAP-ENV:Envelope xmlns:SOAP-ENV="http://www.w3.org/2003/05/soap-envelope" xmlns:SOAP-</div>
<div class="nt" style="position:absolute;left:392.40px;top:312.64px;font-size:11px;line-height:12.639px;white-space:pre;letter-spacing:0.3px;color:#333;font-weight:normal;transform:scaleX(0.9342);transform-origin:0 0;">ENC="http://www.w3.org/2003/05/soap-encoding" xmlns:xsi="http://www.w3.org/2001/XMLSchema-instance"</div>
<div class="nt" style="position:absolute;left:393.20px;top:325.27px;font-size:11px;line-height:12.639px;white-space:pre;letter-spacing:0.3px;color:#333;font-weight:normal;transform:scaleX(0.9323);transform-origin:0 0;">xmlns:xsd="http://www.w3.org/2001/XMLSchema"</div>
<div class="nt" style="position:absolute;left:393.00px;top:337.90px;font-size:11px;line-height:12.639px;white-space:pre;letter-spacing:0.3px;color:#333;font-weight:normal;transform:scaleX(0.9214);transform-origin:0 0;">xmlns:wsa="http://schemas.xmlsoap.org/ws/2004/08/addressing"</div>
<div class="nt" style="position:absolute;left:393.20px;top:350.53px;font-size:11px;line-height:12.639px;white-space:pre;letter-spacing:0.3px;color:#333;font-weight:normal;transform:scaleX(0.9243);transform-origin:0 0;">xmlns:wsdd="http://schemas.xmlsoap.org/ws/2005/04/discovery"</div>
<div class="nt" style="position:absolute;left:393.20px;top:363.16px;font-size:11px;line-height:12.639px;white-space:pre;letter-spacing:0.3px;color:#333;font-weight:normal;transform:scaleX(0.9269);transform-origin:0 0;">xmlns:chan="http://schemas.microsoft.com/ws/2005/02/duplex"</div>
<div class="nt" style="position:absolute;left:393.20px;top:375.79px;font-size:11px;line-height:12.639px;white-space:pre;letter-spacing:0.3px;color:#333;font-weight:normal;transform:scaleX(0.9255);transform-origin:0 0;">xmlns:wsa5="http://www.w3.org/2005/08/addressing" xmlns:xmime="http://www.w3.org/2005/05/xmlmime"</div>
<div class="nt" style="position:absolute;left:393.20px;top:388.42px;font-size:11px;line-height:12.639px;white-space:pre;letter-spacing:0.3px;color:#333;font-weight:normal;transform:scaleX(0.9275);transform-origin:0 0;">xmlns:xop="http://www.w3.org/2004/08/xop/include" xmlns:wsrfbf="http://docs.oasis-open.org/wsrf/bf-2"</div>
<div class="nt" style="position:absolute;left:393.20px;top:401.05px;font-size:11px;line-height:12.639px;white-space:pre;letter-spacing:0.3px;color:#333;font-weight:normal;transform:scaleX(0.9254);transform-origin:0 0;">xmlns:tt="http://www.onvif.org/ver10/schema" xmlns:wstop="http://docs.oasis-open.org/wsn/t-1"</div>
<div class="nt" style="position:absolute;left:393.20px;top:413.68px;font-size:11px;line-height:12.639px;white-space:pre;letter-spacing:0.3px;color:#333;font-weight:normal;transform:scaleX(0.9195);transform-origin:0 0;">xmlns:wsrfr="http://docs.oasis-open.org/wsrf/r-2" xmlns:tan="http://www.onvif.org/ver20/analytics/wsdl"</div>
<div class="nt" style="position:absolute;left:393.20px;top:426.31px;font-size:11px;line-height:12.639px;white-space:pre;letter-spacing:0.3px;color:#333;font-weight:normal;transform:scaleX(0.9372);transform-origin:0 0;">xmlns:tdn="http://www.onvif.org/ver10/network/wsdl" xmlns:tds="http://www.onvif.org/ver10/device/wsdl"</div>
<div class="nt" style="position:absolute;left:393.20px;top:438.94px;font-size:11px;line-height:12.639px;white-space:pre;letter-spacing:0.3px;color:#333;font-weight:normal;transform:scaleX(0.9304);transform-origin:0 0;">xmlns:tev="http://www.onvif.org/ver10/events/wsdl" xmlns:wsnt="http://docs.oasis-open.org/wsn/b-2"</div>
<div class="nt" style="position:absolute;left:393.20px;top:451.57px;font-size:11px;line-height:12.639px;white-space:pre;letter-spacing:0.3px;color:#333;font-weight:normal;transform:scaleX(0.9261);transform-origin:0 0;">xmlns:c14n="http://www.w3.org/2001/10/xml-exc-c14n#" xmlns:wsu="http://docs.oasis-</div>
<div class="nt" style="position:absolute;left:392.69px;top:464.20px;font-size:11px;line-height:12.639px;white-space:pre;letter-spacing:0.3px;color:#333;font-weight:normal;transform:scaleX(0.8994);transform-origin:0 0;">open.org/wss/2004/01/oasis-200401-wss-wssecurity-utility-1.0.xsd"</div>
<div class="nt" style="position:absolute;left:393.20px;top:476.83px;font-size:11px;line-height:12.639px;white-space:pre;letter-spacing:0.3px;color:#333;font-weight:normal;transform:scaleX(0.9357);transform-origin:0 0;">xmlns:xenc="http://www.w3.org/2001/04/xmlenc#" xmlns:wsc="http://schemas.xmlsoap.org/ws/2005/02/sc"</div>
<div class="nt" style="position:absolute;left:393.20px;top:489.46px;font-size:11px;line-height:12.639px;white-space:pre;letter-spacing:0.3px;color:#333;font-weight:normal;transform:scaleX(0.9257);transform-origin:0 0;">xmlns:ds="http://www.w3.org/2000/09/xmldsig#" xmlns:wsse="http://docs.oasis-open.org/wss/2004/01/oasis-</div>
<div class="nt" style="position:absolute;left:392.73px;top:502.09px;font-size:11px;line-height:12.639px;white-space:pre;letter-spacing:0.3px;color:#333;font-weight:normal;transform:scaleX(0.9087);transform-origin:0 0;">200401-wss-wssecurity-secext-1.0.xsd" xmlns:timg="http://www.onvif.org/ver20/imaging/wsdl"</div>
<div class="nt" style="position:absolute;left:393.20px;top:514.72px;font-size:11px;line-height:12.639px;white-space:pre;letter-spacing:0.3px;color:#333;font-weight:normal;transform:scaleX(0.9341);transform-origin:0 0;">xmlns:tmd="http://www.onvif.org/ver10/deviceIO/wsdl" xmlns:tptz="http://www.onvif.org/ver20/ptz/wsdl"</div>
<div class="nt" style="position:absolute;left:393.20px;top:527.35px;font-size:11px;line-height:12.639px;white-space:pre;letter-spacing:0.3px;color:#333;font-weight:normal;transform:scaleX(0.9248);transform-origin:0 0;">xmlns:trt="http://www.onvif.org/ver10/media/wsdl" xmlns:ter="http://www.onvif.org/ver10/error"</div>
<div class="nt" style="position:absolute;left:393.20px;top:539.98px;font-size:11px;line-height:12.639px;white-space:pre;letter-spacing:0.3px;color:#333;font-weight:normal;transform:scaleX(0.9303);transform-origin:0 0;">xmlns:tns1="http://www.onvif.org/ver10/topics" xmlns:trt2="http://www.onvif.org/ver20/media/wsdl"</div>
<div class="nt" style="position:absolute;left:393.20px;top:552.61px;font-size:11px;line-height:12.639px;white-space:pre;letter-spacing:0.3px;color:#333;font-weight:normal;transform:scaleX(0.9337);transform-origin:0 0;">xmlns:tr2="http://www.onvif.org/ver20/media/wsdl" xmlns:ewsd="http://www.onvifext.com/onvif/ext/ver10/wsdl"</div>
<div class="nt" style="position:absolute;left:393.20px;top:565.24px;font-size:11px;line-height:12.639px;white-space:pre;letter-spacing:0.3px;color:#333;font-weight:normal;transform:scaleX(0.9340);transform-origin:0 0;">xmlns:exsd="http://www.onvifext.com/onvif/ext/ver10/schema"</div>
<div class="nt" style="position:absolute;left:393.20px;top:577.87px;font-size:11px;line-height:12.639px;white-space:pre;letter-spacing:0.3px;color:#333;font-weight:normal;transform:scaleX(0.9386);transform-origin:0 0;">xmlns:tnshik="http://www.hikvision.com/2011/event/topics"</div>
<div class="nt" style="position:absolute;left:393.00px;top:590.50px;font-size:11px;line-height:12.639px;white-space:pre;letter-spacing:0.3px;color:#333;font-weight:normal;transform:scaleX(0.9382);transform-origin:0 0;">xmlns:hikwsd="http://www.onvifext.com/onvif/ext/ver10/wsdl"</div>
<div class="nt" style="position:absolute;left:393.20px;top:603.13px;font-size:11px;line-height:12.639px;white-space:pre;letter-spacing:0.3px;color:#333;font-weight:normal;transform:scaleX(0.9353);transform-origin:0 0;">xmlns:hikxsd="http://www.onvifext.com/onvif/ext/ver10/schema"</div>
<div class="nt" style="position:absolute;left:393.20px;top:615.76px;font-size:11px;line-height:12.639px;white-space:pre;letter-spacing:0.3px;color:#333;font-weight:normal;transform:scaleX(0.9316);transform-origin:0 0;">xmlns:tplt="http://www.onvif.org/ver10/plus/schema" xmlns:tpl="http://www.onvif.org/ver10/plus/wsdl"&gt;</div>
<div class="nt" style="position:absolute;left:399.34px;top:628.39px;font-size:11px;line-height:12.639px;white-space:pre;letter-spacing:0.3px;color:#333;font-weight:normal;transform:scaleX(0.8923);transform-origin:0 0;">&lt;SOAP-ENV:Header&gt;</div>
<div class="nt" style="position:absolute;left:405.55px;top:641.02px;font-size:11px;line-height:12.639px;white-space:pre;letter-spacing:0.3px;color:#333;font-weight:normal;transform:scaleX(0.8729);transform-origin:0 0;">&lt;wsse:Security&gt;</div>
<div class="nt" style="position:absolute;left:411.73px;top:653.65px;font-size:11px;line-height:12.639px;white-space:pre;letter-spacing:0.3px;color:#333;font-weight:normal;transform:scaleX(0.9020);transform-origin:0 0;">&lt;wsse:UsernameToken&gt;</div>
<div class="nt" style="position:absolute;left:417.04px;top:666.28px;font-size:11px;line-height:12.639px;white-space:pre;letter-spacing:0.3px;color:#333;font-weight:normal;transform:scaleX(0.8854);transform-origin:0 0;">&lt;wsse:Username&gt;admin&lt;/wsse:Username&gt;</div>
<div class="nt" style="position:absolute;left:417.03px;top:678.91px;font-size:11px;line-height:12.639px;white-space:pre;letter-spacing:0.3px;color:#333;font-weight:normal;transform:scaleX(0.9022);transform-origin:0 0;">&lt;wsse:Password Type="http://docs.oasis-open.org/wss/2004/01/oasis-200401-wss-username-token-profile-</div>
<div class="nt" style="position:absolute;left:392.58px;top:691.54px;font-size:11px;line-height:12.639px;white-space:pre;letter-spacing:0.3px;color:#333;font-weight:normal;transform:scaleX(0.9050);transform-origin:0 0;">1.0#PasswordDigest"&gt;RrHl/rw3En9GgudrHFrcavyqJLk=&lt;/wsse:Password&gt;</div>
<div class="nt" style="position:absolute;left:417.03px;top:704.17px;font-size:11px;line-height:12.639px;white-space:pre;letter-spacing:0.3px;color:#333;font-weight:normal;transform:scaleX(0.9131);transform-origin:0 0;">&lt;wsse:Nonce&gt;z/XMO7VNOsHcUfl1at6HFA==&lt;/wsse:Nonce&gt;</div>
<div class="nt" style="position:absolute;left:417.04px;top:716.80px;font-size:11px;line-height:12.639px;white-space:pre;letter-spacing:0.3px;color:#333;font-weight:normal;transform:scaleX(0.8961);transform-origin:0 0;">&lt;wsu:Created&gt;2023-03-07T00:10:54Z&lt;/wsu:Created&gt;</div>
<div class="nt" style="position:absolute;left:410.83px;top:729.43px;font-size:11px;line-height:12.639px;white-space:pre;letter-spacing:0.3px;color:#333;font-weight:normal;transform:scaleX(0.9172);transform-origin:0 0;">&lt;/wsse:UsernameToken&gt;</div>
<div class="nt" style="position:absolute;left:404.63px;top:742.06px;font-size:11px;line-height:12.639px;white-space:pre;letter-spacing:0.3px;color:#333;font-weight:normal;transform:scaleX(0.9103);transform-origin:0 0;">&lt;/wsse:Security&gt;</div>
<div class="nt" style="position:absolute;left:399.33px;top:754.69px;font-size:11px;line-height:12.639px;white-space:pre;letter-spacing:0.3px;color:#333;font-weight:normal;transform:scaleX(0.9096);transform-origin:0 0;">&lt;/SOAP-ENV:Header&gt;</div>
<div class="nt" style="position:absolute;left:399.34px;top:767.32px;font-size:11px;line-height:12.639px;white-space:pre;letter-spacing:0.3px;color:#333;font-weight:normal;transform:scaleX(0.8908);transform-origin:0 0;">&lt;SOAP-ENV:Body&gt;</div>
<div class="nt" style="position:absolute;left:405.54px;top:779.95px;font-size:11px;line-height:12.639px;white-space:pre;letter-spacing:0.3px;color:#333;font-weight:normal;transform:scaleX(0.8952);transform-origin:0 0;">&lt;tptz:AbsoluteMoveResponse&gt;</div>
<div class="nt" style="position:absolute;left:405.53px;top:792.58px;font-size:11px;line-height:12.639px;white-space:pre;letter-spacing:0.3px;color:#333;font-weight:normal;transform:scaleX(0.9049);transform-origin:0 0;">&lt;/tptz:AbsoluteMoveResponse&gt;</div>
<div class="nt" style="position:absolute;left:399.33px;top:805.21px;font-size:11px;line-height:12.639px;white-space:pre;letter-spacing:0.3px;color:#333;font-weight:normal;transform:scaleX(0.9044);transform-origin:0 0;">&lt;/SOAP-ENV:Body&gt;</div>
<div class="nt" style="position:absolute;left:393.43px;top:817.84px;font-size:11px;line-height:12.639px;white-space:pre;letter-spacing:0.3px;color:#333;font-weight:normal;transform:scaleX(0.9108);transform-origin:0 0;">&lt;/SOAP-ENV:Envelope&gt;</div>
</body></html>
